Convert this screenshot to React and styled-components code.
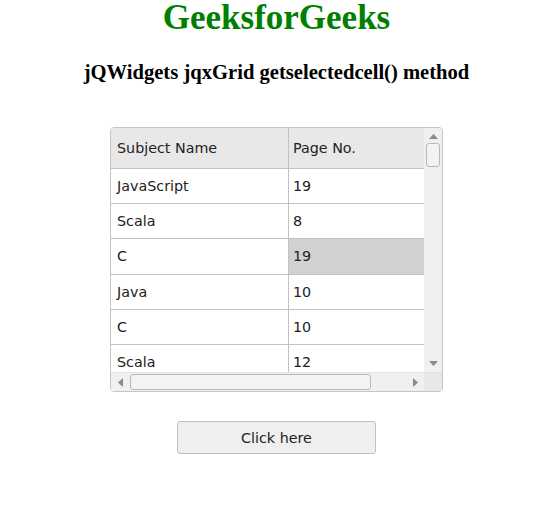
import React from "react";
import styled, { createGlobalStyle } from "styled-components";

const Global = createGlobalStyle`
  html, body { margin: 0; padding: 0; background: #fff; }
  body { font-family: "Liberation Serif", "Times New Roman", serif; }
`;

const Page = styled.div`
  width: 553px;
  display: flex;
  flex-direction: column;
  align-items: center;
`;

const Title = styled.h1`
  margin: 0;
  font-family: "Liberation Serif", "Times New Roman", serif;
  font-weight: bold;
  font-size: 35px;
  line-height: 35px;
  color: #008000;
`;

const Subtitle = styled.h3`
  margin: 25px 0 0;
  font-family: "Liberation Serif", "Times New Roman", serif;
  font-weight: bold;
  font-size: 20.6px;
  line-height: 24px;
  color: #000;
`;

const Grid = styled.div`
  margin-top: 43px;
  width: 331px;
  border: 1px solid #c5c5c5;
  border-radius: 4px;
  overflow: hidden;
  display: grid;
  grid-template-columns: 313px 18px;
  grid-template-rows: 244px 19px;
  font-family: "DejaVu Sans", Verdana, sans-serif;
  font-size: 14.3px;
  color: #222;
`;

const Body = styled.div`
  overflow: hidden;
  background: #fff;
`;

const Row = styled.div`
  display: grid;
  grid-template-columns: 177px 1px 135px;
  height: ${(p) => (p.$header ? 40 : 34.2)}px;
  border-bottom: 1px solid #c2c2c2;
  background: ${(p) => (p.$header ? "#e8e8e8" : "#fff")};
`;

const Divider = styled.div`
  background: #c2c2c2;
`;

const Cell = styled.div`
  display: flex;
  align-items: center;
  padding-left: ${(p) => p.$pad}px;
  background: ${(p) => (p.$selected ? "#d1d1d1" : "transparent")};
  white-space: nowrap;
`;

const VScroll = styled.div`
  background: #f0f0f0;
  display: flex;
  flex-direction: column;
  align-items: center;
  padding-top: 6px;
`;

const HScroll = styled.div`
  background: #f0f0f0;
  border-top: 1px solid #e2e2e2;
  display: flex;
  align-items: center;
  padding: 0 6px 0 7px;
`;

const Corner = styled.div`
  background: #e8e8e8;
  border-top: 1px solid #e2e2e2;
`;

const VThumb = styled.div`
  width: 14px;
  height: 24px;
  margin-top: 4px;
  border: 1px solid #b8b8b8;
  border-radius: 3px;
  background: #f3f3f3;
  box-sizing: border-box;
`;

const HThumb = styled.div`
  width: 241px;
  height: 16px;
  margin-left: 7px;
  border: 1px solid #b8b8b8;
  border-radius: 3px;
  background: #f3f3f3;
  box-sizing: border-box;
`;

const Spacer = styled.div`
  flex: 1;
`;

const EndGap = styled.div`
  height: 6px;
  flex: none;
`;

const Arrow = styled.svg`
  display: block;
  flex: none;
`;

const ButtonEl = styled.button`
  margin-top: 29px;
  width: 199px;
  height: 33px;
  border: 1px solid #c0c0c0;
  border-radius: 3px;
  background: #efefef;
  font-family: "DejaVu Sans", Verdana, sans-serif;
  font-size: 14.3px;
  color: #222;
  padding: 0;
`;

const rows = [
  ["JavaScript", "19"],
  ["Scala", "8"],
  ["C", "19", true],
  ["Java", "10"],
  ["C", "10"],
  ["Scala", "12"],
];

const Up = () => (
  <Arrow width="9" height="5" viewBox="0 0 9 5">
    <polygon points="0,5 9,5 4.5,0" fill="#8a8a8a" />
  </Arrow>
);
const Down = () => (
  <Arrow width="9" height="5" viewBox="0 0 9 5">
    <polygon points="0,0 9,0 4.5,5" fill="#8a8a8a" />
  </Arrow>
);
const Left = () => (
  <Arrow width="5" height="9" viewBox="0 0 5 9">
    <polygon points="5,0 5,9 0,4.5" fill="#8a8a8a" />
  </Arrow>
);
const Right = () => (
  <Arrow width="5" height="9" viewBox="0 0 5 9">
    <polygon points="0,0 0,9 5,4.5" fill="#8a8a8a" />
  </Arrow>
);

export default function App() {
  return (
    <>
      <Global />
      <Page>
        <Title>GeeksforGeeks</Title>
        <Subtitle>jQWidgets jqxGrid getselectedcell() method</Subtitle>
        <Grid>
          <Body>
            <Row $header>
              <Cell $pad={6}>Subject Name</Cell>
              <Divider />
              <Cell $pad={4}>Page No.</Cell>
            </Row>
            {rows.map(([name, page, sel], i) => (
              <Row key={i}>
                <Cell $pad={6}>{name}</Cell>
                <Divider />
                <Cell $pad={4} $selected={sel}>
                  {page}
                </Cell>
              </Row>
            ))}
          </Body>
          <VScroll>
            <Up />
            <VThumb />
            <Spacer />
            <Down />
            <EndGap />
          </VScroll>
          <HScroll>
            <Left />
            <HThumb />
            <Spacer />
            <Right />
          </HScroll>
          <Corner />
        </Grid>
        <ButtonEl>Click here</ButtonEl>
      </Page>
    </>
  );
}
